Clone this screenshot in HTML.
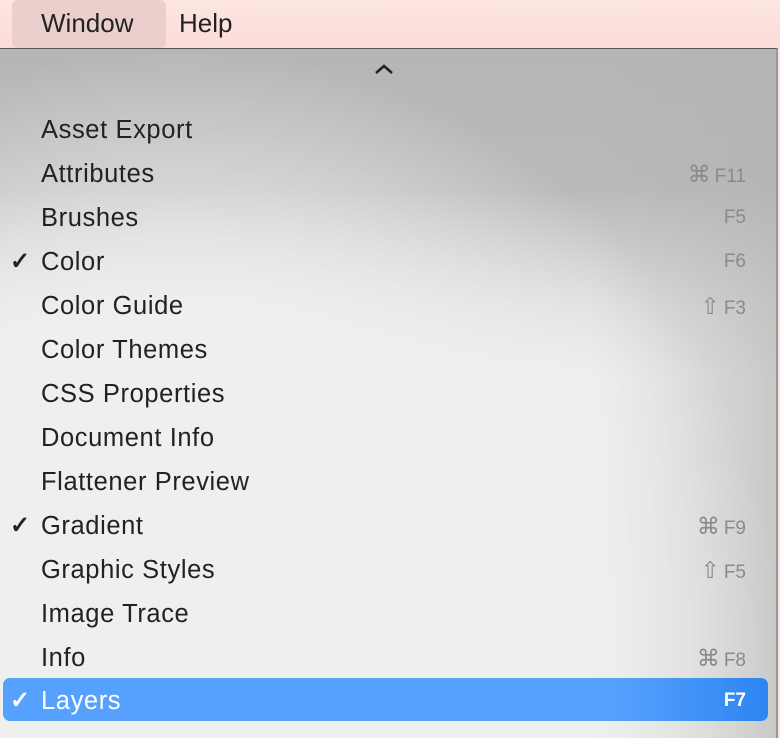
<!DOCTYPE html>
<html><head><style>
*{margin:0;padding:0;box-sizing:border-box}
body{width:780px;height:730px;overflow:hidden;background:#fbe4e0;font-family:"Liberation Sans",sans-serif;position:relative}
.bar{position:absolute;left:0;top:0;width:780px;height:48px;background:linear-gradient(180deg,#fde6e2,#fbdcd8)}
.win{position:absolute;left:12px;top:0;width:154px;height:48px;background:#ebcfcc;border-radius:6px}
.bar span{position:absolute;top:8px;font-size:26px;color:#222}
.menu{position:absolute;left:0;top:48px;width:778px;height:690px;border-top:1.5px solid #555;border-right:2px solid #999;
background:
radial-gradient(ellipse 600px 600px at 180px 600px,#efefed 55%,rgba(239,239,237,0) 100%),
linear-gradient(90deg,rgba(0,0,0,0) 0,rgba(0,0,0,0) 590px,rgba(180,180,180,.65) 100%),
linear-gradient(180deg,#b6b6b5 0,#bababa 140px,#e0e0de 260px,#efefed 330px);}
.item{position:absolute;left:0;width:778px;height:44px;font-size:25.5px;color:#222;line-height:46px;letter-spacing:0.6px}
.item .t{position:absolute;left:41px}
.item .c{position:absolute;left:10px;font-size:24px;font-weight:bold}
.item .k{position:absolute;right:32px;font-size:19px;color:#8a8a8a;letter-spacing:0}
.item .k b{font-size:23px;font-weight:normal;margin-right:4px}
.sel{left:3px;width:765px;top:678px;height:43px;border-radius:7px;background:linear-gradient(90deg,#56a1fd 0,#56a1fd 80%,#2d85f2 100%);color:#fff;line-height:46px}
.sel .t{left:38px}.sel .c{left:7px}.sel .k{right:22px;color:#fff;font-weight:bold}
.up{position:absolute;left:373px;top:62px}
</style></head><body>
<div class="bar"><div class="win"></div><span style="left:41px">Window</span><span style="left:179px">Help</span></div>
<div class="menu"></div>
<svg class="up" width="22" height="14"><path d="M3 11 L11 4 L19 11" stroke="#222" stroke-width="2.6" fill="none"/></svg>
<div class="item" style="top:107px"><span class="t">Asset Export</span></div>
<div class="item" style="top:151px"><span class="t">Attributes</span><span class="k"><b>⌘</b>F11</span></div>
<div class="item" style="top:195px"><span class="t">Brushes</span><span class="k">F5</span></div>
<div class="item" style="top:239px"><span class="c">✓</span><span class="t">Color</span><span class="k">F6</span></div>
<div class="item" style="top:283px"><span class="t">Color Guide</span><span class="k"><b>⇧</b>F3</span></div>
<div class="item" style="top:327px"><span class="t">Color Themes</span></div>
<div class="item" style="top:371px"><span class="t">CSS Properties</span></div>
<div class="item" style="top:415px"><span class="t">Document Info</span></div>
<div class="item" style="top:459px"><span class="t">Flattener Preview</span></div>
<div class="item" style="top:503px"><span class="c">✓</span><span class="t">Gradient</span><span class="k"><b>⌘</b>F9</span></div>
<div class="item" style="top:547px"><span class="t">Graphic Styles</span><span class="k"><b>⇧</b>F5</span></div>
<div class="item" style="top:591px"><span class="t">Image Trace</span></div>
<div class="item" style="top:635px"><span class="t">Info</span><span class="k"><b>⌘</b>F8</span></div>
<div class="item sel"><span class="c">✓</span><span class="t">Layers</span><span class="k">F7</span></div>
</body></html>
